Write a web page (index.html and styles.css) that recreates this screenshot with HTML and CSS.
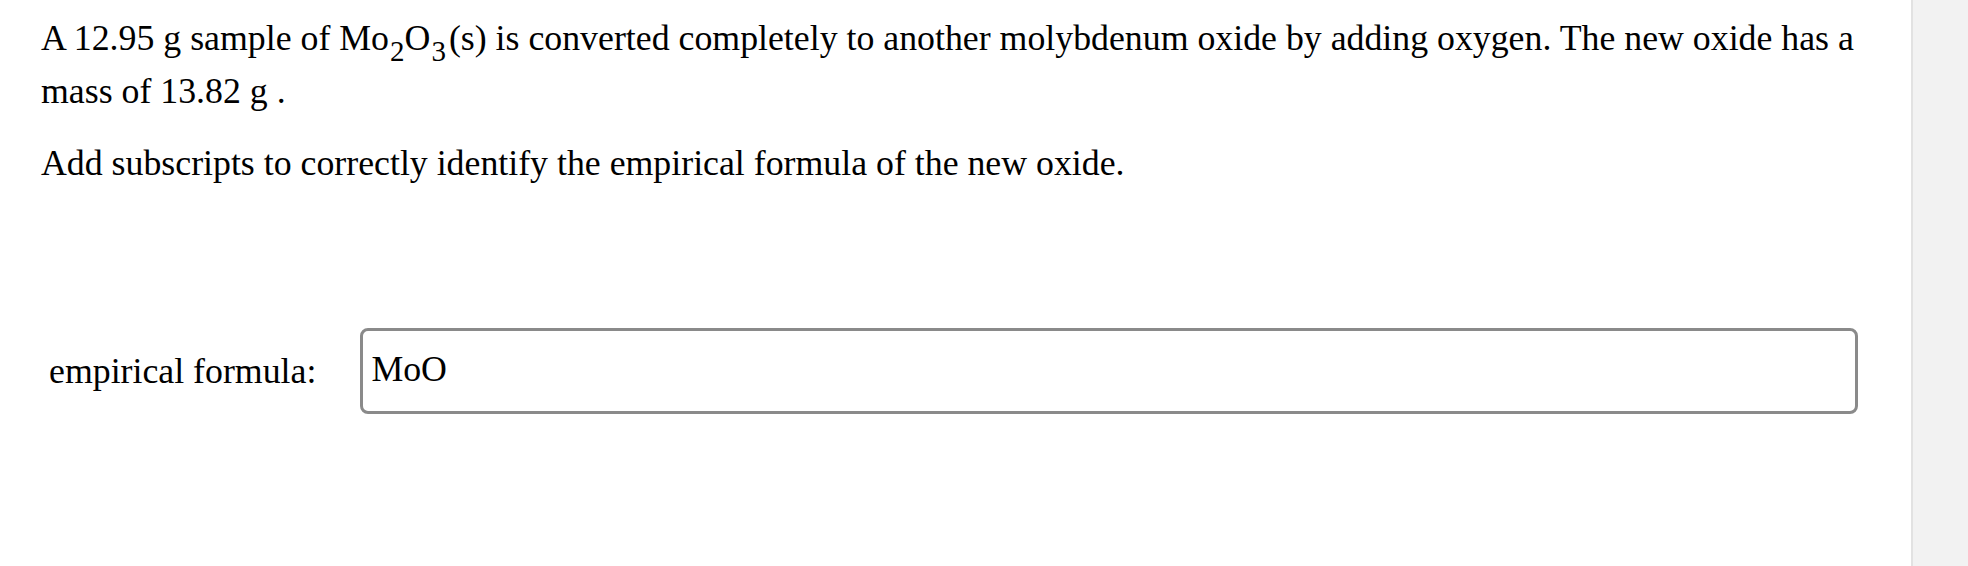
FILE: index.html
```html
<!DOCTYPE html>
<html lang="en">
<head>
<meta charset="utf-8">
<title>Empirical formula</title>
<link rel="stylesheet" href="styles.css">
</head>
<body>
<div class="page">
  <main class="main">
    <p class="q">A 12.95 g sample of Mo<sub>2</sub>O<sub class="last">3</sub>(s) is converted completely to another molybdenum oxide by adding oxygen. The new oxide has a mass of 13.82 g .</p>
    <p class="q">Add subscripts to correctly identify the empirical formula of the new oxide.</p>
    <div class="answer">
      <span class="label">empirical formula:</span>
      <div class="box"><span class="formula">MoO</span></div>
    </div>
  </main>
  <aside class="side"></aside>
</div>
</body>
</html>
```
FILE: styles.css
```css
html, body {
  margin: 0;
  padding: 0;
  height: 100%;
  background: #ffffff;
}
body {
  font-family: "Liberation Serif", "Times New Roman", serif;
  font-size: 35.8px;
  color: #000000;
}
.page {
  display: flex;
  height: 566px;
}
.main {
  flex: 1;
  padding: 12px 44px 0 41px;
  background: #ffffff;
}
.q {
  margin: 0;
  line-height: 53px;
}
.q + .q {
  margin-top: 19px;
}
.q sub {
  font-size: 29px;
  line-height: 0;
  vertical-align: -11px;
  margin-left: 1px;
}
.q sub.last {
  margin-right: 3px;
}
.answer {
  display: flex;
  align-items: center;
  gap: 44px;
  margin-top: 138px;
  margin-right: 9px;
  padding-left: 8px;
}
.label {
  white-space: nowrap;
  line-height: 40px;
}
.box {
  flex: 1;
  height: 76px;
  border: 3px solid #8a8a8a;
  border-radius: 8px;
  display: flex;
  align-items: center;
  padding: 0 8px;
  padding-bottom: 4px;
  box-sizing: content-box;
}
.formula {
  line-height: 40px;
}
.side {
  width: 55px;
  background: #f2f2f2;
  border-left: 2px solid #e2e2e2;
}
```
